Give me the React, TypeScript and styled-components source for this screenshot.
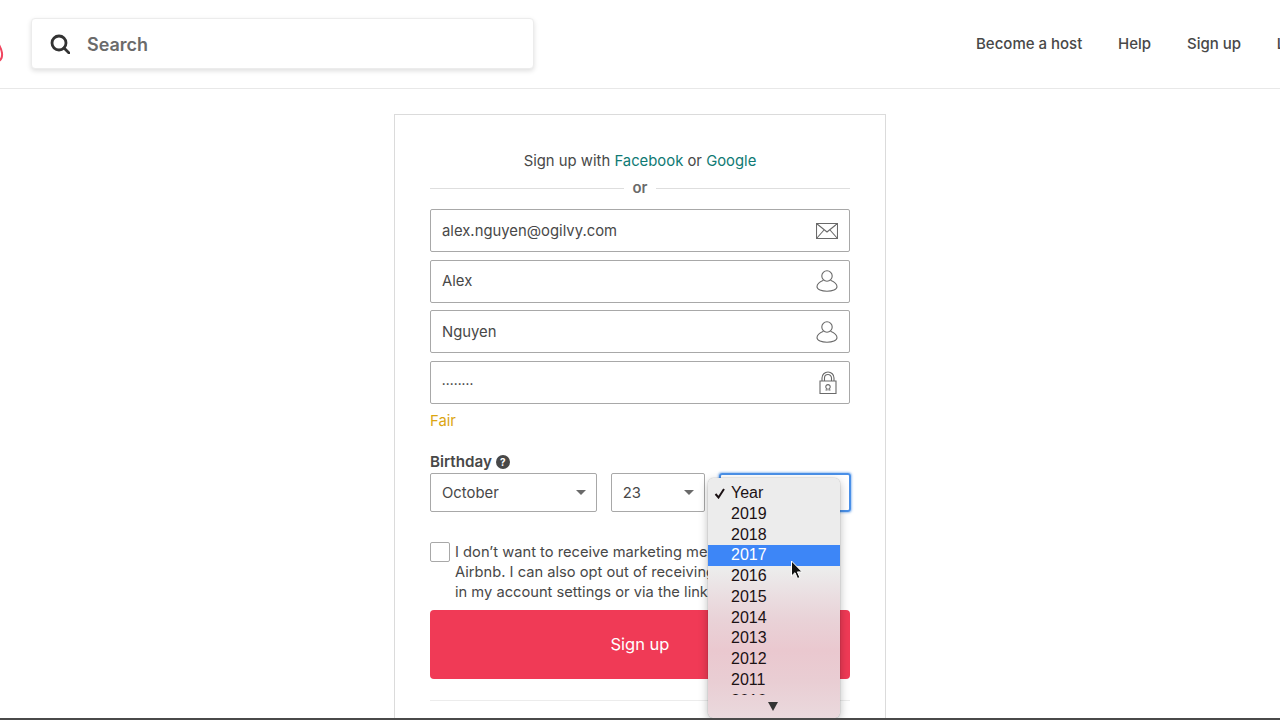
import React from "react";
import styled, { createGlobalStyle } from "styled-components";

const Global = createGlobalStyle`
  html, body { margin: 0; padding: 0; background: #fff; }
  body { font-family: Inter, "Noto Sans", sans-serif; color: #484848; }
  * { box-sizing: border-box; }
`;

const Page = styled.div`
  position: relative;
  width: 1280px;
  height: 720px;
  overflow: hidden;
  background: #fff;
  border-bottom: 2px solid #4a4a4a;
`;

const Header = styled.header`
  display: flex;
  align-items: flex-start;
  height: 89px;
  border-bottom: 1px solid #e8e8e8;
`;

const Logo = styled.svg`
  flex: none;
  width: 32px;
  height: 34px;
  margin: 29px 0 0 -28px;
`;

const SearchBox = styled.div`
  flex: none;
  display: flex;
  align-items: center;
  gap: 17px;
  width: 503px;
  height: 51px;
  margin: 18px 0 0 27px;
  padding: 1px 0 0 18px;
  background: #fff;
  border: 1px solid #ececec;
  border-radius: 4px;
  box-shadow: 0 2px 5px rgba(0, 0, 0, 0.13);
`;

const SearchLabel = styled.span`
  font-size: 18px;
  font-weight: 600;
  color: #6b6b6b;
`;

const Nav = styled.nav`
  flex: none;
  display: flex;
  gap: 35.8px;
  margin: 35.4px 0 0 442px;
  font-size: 15px;
  font-weight: 500;
  line-height: 18px;
  white-space: nowrap;
  color: #484848;
`;

const Card = styled.main`
  width: 492px;
  height: 640px;
  margin: 25px auto 0;
  padding: 36px 35px 0;
  border: 1px solid #dbdbdb;
`;

const SocialLine = styled.div`
  text-align: center;
  font-size: 14.85px;
  line-height: 20px;
`;

const SocialLink = styled.a`
  color: #0f7a74;
`;

const OrRow = styled.div`
  display: flex;
  align-items: center;
  gap: 9px;
  height: 16px;
  margin-top: 9px;
  font-size: 14.85px;
  font-weight: 600;
  color: #6a6a6a;
  &::before,
  &::after {
    content: "";
    flex: 1;
    height: 1px;
    background: #dedede;
  }
`;

const Fields = styled.div`
  display: grid;
  row-gap: 7.5px;
  margin-top: 13px;
`;

const Field = styled.div`
  display: flex;
  align-items: center;
  justify-content: space-between;
  height: 43px;
  padding: 0 11px;
  border: 1px solid #a8a8a8;
  border-radius: 2px;
  font-size: 14.85px;
`;

const Dots = styled.span`
  padding-top: 2px;
  font-size: 6px;
  letter-spacing: 0.6px;
  color: #333;
`;

const IconSvg = styled.svg`
  flex: none;
  fill: none;
  stroke: #6a6a6a;
  stroke-width: 1.1;
`;

const Strength = styled.div`
  margin-top: 7px;
  font-size: 14.85px;
  line-height: 20px;
  color: #dba511;
`;

const BirthdayLabel = styled.div`
  display: flex;
  align-items: center;
  gap: 4px;
  margin-top: 21px;
  height: 20px;
  font-size: 15.2px;
  font-weight: 600;
`;

const HelpDot = styled.span`
  display: inline-flex;
  align-items: center;
  justify-content: center;
  width: 14px;
  height: 14px;
  border-radius: 50%;
  background: #484848;
  color: #fff;
  font-size: 10px;
  font-weight: 700;
`;

const SelectRow = styled.div`
  display: flex;
  gap: 13.75px;
  margin-top: 1.5px;
`;

const Select = styled.div<{ $width: number; $focused?: boolean }>`
  display: flex;
  align-items: center;
  justify-content: space-between;
  flex: none;
  width: ${(p) => p.$width}px;
  height: 39px;
  padding: 0 10px 0 11px;
  border: ${(p) => (p.$focused ? "2px solid #4a90e8" : "1px solid #a8a8a8")};
  border-radius: ${(p) => (p.$focused ? "3px" : "2px")};
  font-size: 14.85px;
  box-shadow: ${(p) => (p.$focused ? "0 0 2px 1px rgba(74,144,232,.5)" : "none")};
`;

const Caret = styled.span`
  width: 0;
  height: 0;
  border-left: 5px solid transparent;
  border-right: 5px solid transparent;
  border-top: 5px solid #6a6a6a;
`;

const Consent = styled.div`
  display: flex;
  gap: 5px;
  margin-top: 30px;
`;

const Check = styled.span`
  flex: none;
  width: 20px;
  height: 20px;
  border: 1px solid #a8a8a8;
  border-radius: 2px;
`;

const ConsentText = styled.p`
  margin: 0;
  width: 395px;
  font-size: 14.7px;
  line-height: 20px;
`;

const SubmitButton = styled.button`
  display: block;
  width: 420px;
  height: 69px;
  margin-top: 8px;
  padding-bottom: 3px;
  border: 0;
  border-radius: 4px;
  background: #f03a56;
  color: #fff;
  font-family: inherit;
  font-size: 16.5px;
  font-weight: 400;
`;

const Divider = styled.hr`
  margin: 21px 0 0;
  border: 0;
  height: 1px;
  background: #ececec;
`;

const Menu = styled.div`
  position: absolute;
  left: 708px;
  top: 478px;
  width: 132px;
  height: 240px;
  padding-top: 5px;
  border-radius: 6px;
  overflow: hidden;
  font-family: "Liberation Sans", Arial, sans-serif;
  font-size: 16px;
  color: #1b1114;
  background: linear-gradient(
    180deg,
    #ececec 0%,
    #ececec 38%,
    #e9d3d8 58%,
    #eac8cf 72%,
    #e9cdd3 84%,
    #ead9dd 100%
  );
  box-shadow: 0 0 1px rgba(0, 0, 0, 0.5), 0 3px 10px rgba(0, 0, 0, 0.28);
`;

const MenuList = styled.div`
  height: 212px;
  overflow: hidden;
`;

const MenuItem = styled.div<{ $active?: boolean }>`
  position: relative;
  height: 20.75px;
  line-height: 20.75px;
  padding-left: 23px;
  background: ${(p) => (p.$active ? "#3d86f7" : "transparent")};
  color: ${(p) => (p.$active ? "#fff" : "inherit")};
`;

const Tick = styled.svg`
  position: absolute;
  left: 6px;
  top: 5px;
  fill: none;
  stroke: #1b1114;
  stroke-width: 2;
`;

const MenuArrow = styled.span`
  position: absolute;
  left: 60px;
  bottom: 7px;
  width: 0;
  height: 0;
  border-left: 5.500px solid transparent;
  border-right: 5.500px solid transparent;
  border-top: 9px solid #333;
`;

const Pointer = styled.svg`
  position: absolute;
  left: 790px;
  top: 560px;
`;

const years = ["2019", "2018", "2017", "2016", "2015", "2014", "2013", "2012", "2011", "2010"];

const Person = () => (
  <IconSvg width="22" height="22" viewBox="0 0 22 22">
    <circle cx="11" cy="6" r="5.200" />
    <path d="M7.500 10.300C3.500 12 1 14.500 1 16.800c0 2.700 4.500 4.400 10 4.400s10-1.700 10-4.400c0-2.300-2.500-4.800-6.500-6.500" />
  </IconSvg>
);

export default function App() {
  return (
    <Page>
      <Global />
      <Header>
        <Logo viewBox="0 0 32 34" aria-hidden="true">
          <path
            d="M16 30c-6 6-15 3-14-6C3 17 11 5 16 3c5 2 13 14 14 21 1 9-8 12-14 6zm0 0c-4-5-7-10-7-14a7 7 0 0 1 14 0c0 4-3 9-7 14z"
            fill="none"
            stroke="#f0455f"
            strokeWidth="2"
          />
        </Logo>
        <SearchBox>
          <svg width="20" height="20" viewBox="0 0 20 20" fill="none" stroke="#333" strokeWidth="2.800">
            <circle cx="9" cy="9" r="7" />
            <path d="M14 14l5 5" strokeLinecap="round" />
          </svg>
          <SearchLabel>Search</SearchLabel>
        </SearchBox>
        <Nav>
          <span>Become a host</span>
          <span>Help</span>
          <span>Sign up</span>
          <span>Log in</span>
        </Nav>
      </Header>
      <Card>
        <SocialLine>
          Sign up with <SocialLink>Facebook</SocialLink> or <SocialLink>Google</SocialLink>
        </SocialLine>
        <OrRow>or</OrRow>
        <Fields>
          <Field>
            alex.nguyen@ogilvy.com
            <IconSvg width="22" height="16" viewBox="0 0 22 16">
              <path d="M.5.500h21v15H.5zM.5.500 11 9 21.500.500M.5 15.500 8 7M21.500 15.500 14 7" />
            </IconSvg>
          </Field>
          <Field>
            Alex
            <Person />
          </Field>
          <Field>
            Nguyen
            <Person />
          </Field>
          <Field>
            <Dots>••••••••</Dots>
            <IconSvg width="19" height="23" viewBox="0 0 19 23">
              <path d="M1 10h16v12.500H1zM3 10V7a6 6 0 0 1 12 0v3M5.500 10V7a3.500 3.500 0 0 1 7 0v3" />
              <path d="M6.500 19h1.500v-1.200a2.200 2.200 0 1 1 2 0V19h1.500" />
            </IconSvg>
          </Field>
        </Fields>
        <Strength>Fair</Strength>
        <BirthdayLabel>
          Birthday <HelpDot>?</HelpDot>
        </BirthdayLabel>
        <SelectRow>
          <Select $width={167}>
            October
            <Caret />
          </Select>
          <Select $width={94.5}>
            23
            <Caret />
          </Select>
          <Select $width={131.5} $focused />
        </SelectRow>
        <Consent>
          <Check />
          <ConsentText>
            I don’t want to receive marketing messages from
            <br />
            Airbnb. I can also opt out of receiving these at any time
            <br />
            in my account settings or via the link in the message.
          </ConsentText>
        </Consent>
        <SubmitButton>Sign up</SubmitButton>
        <Divider />
      </Card>
      <Menu>
        <MenuList>
          <MenuItem>
            <Tick width="12" height="11" viewBox="0 0 12 11">
              <path d="M1.500 6l3 3.500L10 1" />
            </Tick>
            Year
          </MenuItem>
          {years.map((y) => (
            <MenuItem key={y} $active={y === "2017"}>
              {y}
            </MenuItem>
          ))}
        </MenuList>
        <MenuArrow />
      </Menu>
      <Pointer width="13" height="20" viewBox="0 0 13 20">
        <path d="M1.500 1v15l3.500-3.300 2.500 5.800 2.400-1-2.500-5.600h4.800z" fill="#111" stroke="#fff" strokeWidth="1" />
      </Pointer>
    </Page>
  );
}
